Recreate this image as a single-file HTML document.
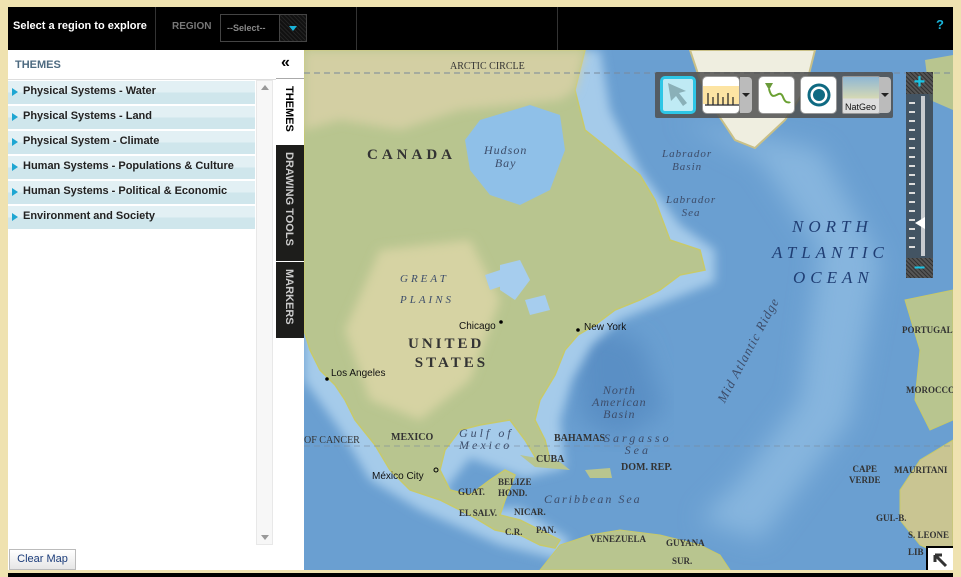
<!DOCTYPE html>
<html><head><meta charset="utf-8">
<style>
*{margin:0;padding:0;box-sizing:border-box}
body{width:961px;height:577px;background:#efe2b0;position:relative;overflow:hidden;font-family:"Liberation Sans",sans-serif}
.hdr{position:absolute;left:8px;top:7px;width:945px;height:43px;background:#000}
.hdr .t{position:absolute;left:5px;top:13px;color:#fff;font-weight:bold;font-size:11px}
.sep{position:absolute;top:0;width:1px;height:43px;background:#333}
.reg{position:absolute;left:164px;top:14px;color:#777;font-weight:bold;font-size:10px}
.sel{position:absolute;left:212px;top:7px;width:87px;height:28px;border:1px solid #444;background:#000}
.sel span{position:absolute;left:6px;top:8px;color:#888;font-size:9px;font-weight:bold}
.sel i{position:absolute;right:0;top:0;width:27px;height:26px;border-left:1px solid #444;background:repeating-linear-gradient(45deg,#222 0 1px,#111 1px 3px)}
.sel i:after{content:"";position:absolute;left:9px;top:11px;border:4px solid transparent;border-top:5px solid #19b3d8}
.q{position:absolute;left:928px;top:10px;color:#19b3d8;font-weight:bold;font-size:13px}
.left{position:absolute;left:8px;top:50px;width:268px;height:520px;background:#fff}
.th{position:absolute;left:7px;top:9px;color:#4d6a80;font-weight:bold;font-size:11px}
.hl{position:absolute;left:0;top:29px;width:268px;height:1px;background:#ddd}
.item{position:absolute;left:0;width:247px;height:23px;background:linear-gradient(#e2f0f4 0 50%,#cfe6ec 50%);font-size:11px;font-weight:bold;color:#222}
.item span{position:absolute;left:15px;top:4px}
.item:before{content:"";position:absolute;left:4px;top:7px;border:4px solid transparent;border-left:6px solid #1ea6d2;border-right:0}
.sb{position:absolute;left:248px;top:30px;width:17px;height:465px;background:#f7f7f7;border:1px solid #e8e8e8}
.cm{position:absolute;left:1px;top:499px;width:67px;height:21px;border:1px solid #bbb;background:linear-gradient(#fff,#e6e6e6);color:#1b3c7a;font-size:11px;text-align:center;line-height:19px}
.tabs{position:absolute;left:276px;top:50px;width:28px;height:520px;background:#fff}
.tab{position:absolute;left:0;width:28px;background:#1d1d1b;color:#ccc;font-weight:bold;font-size:11px;writing-mode:vertical-rl}
.tab span{position:absolute;left:7px;top:7px}
.map{position:absolute;left:304px;top:50px;width:649px;height:520px;overflow:hidden;background:#6fa5d5}
.lb{position:absolute;font-family:"Liberation Serif",serif;color:#333;white-space:nowrap}
.sc{font-weight:bold;letter-spacing:2px}
.it{font-style:italic;color:#3d4d6a;letter-spacing:1px}
.oc{font-style:italic;color:#1f3d73;letter-spacing:5px;font-size:17px}
.cty{font-family:"Liberation Sans",sans-serif;font-size:10px;color:#111}
.tools{position:absolute;left:351px;top:22px;width:238px;height:46px;background:rgba(80,80,80,.85);border-radius:2px}
.btn{position:absolute;top:4px;height:38px;background:#fff;border-radius:5px;border:1px solid #999}
.zoom{position:absolute;left:602px;top:22px;width:27px;height:206px;background:rgba(60,70,80,.85)}
.bot{position:absolute;left:8px;top:573px;width:945px;height:4px;background:#000}
</style></head><body>
<div class="hdr">
 <div class="t">Select a region to explore</div>
 <div class="sep" style="left:147px"></div>
 <div class="reg">REGION</div>
 <div class="sel"><span>--Select--</span><i></i></div>
 <div class="sep" style="left:348px"></div>
 <div class="sep" style="left:549px"></div>
 <div class="q">?</div>
</div>
<div class="left">
 <div class="th">THEMES</div><div class="hl"></div>
 <div class="item" style="top:31px"><span>Physical Systems - Water</span></div>
 <div class="item" style="top:56px"><span>Physical Systems - Land</span></div>
 <div class="item" style="top:81px"><span>Physical System - Climate</span></div>
 <div class="item" style="top:106px"><span>Human Systems - Populations &amp; Culture</span></div>
 <div class="item" style="top:131px"><span>Human Systems - Political &amp; Economic</span></div>
 <div class="item" style="top:156px"><span>Environment and Society</span></div>
 <div class="sb"><div style="position:absolute;left:4px;top:4px;border:4px solid transparent;border-bottom:5px solid #999;border-top:0"></div><div style="position:absolute;left:4px;bottom:4px;border:4px solid transparent;border-top:5px solid #999;border-bottom:0"></div></div>
 <div class="cm">Clear Map</div>
</div>
<div class="tabs">
 <div style="position:absolute;left:5px;top:4px;font-size:16px;font-weight:bold;color:#000">«</div>
 <div style="position:absolute;left:0;top:28px;width:28px;height:1px;background:#aaa"></div>
 <div class="tab" style="top:29px;height:66px;background:#fff;color:#000"><span>THEMES</span></div>
 <div class="tab" style="top:95px;height:116px"><span>DRAWING TOOLS</span></div>
 <div class="tab" style="top:212px;height:76px"><span>MARKERS</span></div>
</div>
<div class="map">
<svg width="649" height="520" viewBox="304 50 649 520" style="position:absolute;left:0;top:0">
 <defs><filter id="b"><feGaussianBlur stdDeviation="12"/></filter><filter id="b2"><feGaussianBlur stdDeviation="5"/></filter></defs>
 <rect x="304" y="50" width="649" height="520" fill="#6a9fd1"/>
 <path d="M680 120 L760 160 L820 250 L800 400 L740 480 L700 520 L760 540 L850 420 L880 260 L820 150Z" fill="#86b5de" filter="url(#b)"/>
 <path d="M575 320 L640 340 L665 410 L620 440 L580 420Z" fill="#5a8fc5" filter="url(#b)"/>
 <path d="M304 50 L600 50 L610 110 L640 170 L680 225 L715 250 L715 282 L670 300 L620 320 L592 345 L572 380 L560 420 L565 468 L525 478 L470 458 L445 490 L470 508 L520 508 L570 540 L560 560 L500 545 L420 510 L370 480 L340 430 L315 395 L304 380Z" fill="#a5cbea" filter="url(#b2)"/>
 <path d="M304 50 L585 50 L575 90 L585 130 L610 150 L640 175 L655 200 L670 240 L700 250 L705 270 L680 275 L660 290 L640 300 L615 310 L595 325 L578 335 L565 350 L555 375 L540 400 L535 420 L545 440 L550 460 L540 465 L525 440 L510 420 L480 425 L460 430 L445 450 L440 470 L450 490 L470 495 L490 480 L505 470 L515 475 L505 500 L500 515 L520 520 L540 530 L560 540 L555 548 L540 545 L520 535 L495 530 L470 515 L440 500 L410 490 L390 470 L375 445 L355 420 L345 400 L335 385 L320 370 L310 350 L304 330Z" fill="#b8c58f" stroke="#c7c96a" stroke-width="1.5"/>
 <path d="M304 50 L585 50 L575 90 L560 100 L460 110 L400 130 L340 120 L304 130Z" fill="#d3cfa3" filter="url(#b2)"/>
 <path d="M380 250 L470 240 L500 300 L470 380 L420 420 L370 400 L345 330Z" fill="#d6d3a3" filter="url(#b2)"/>
 <path d="M480 120 L530 105 L560 115 L565 150 L550 190 L520 205 L490 195 L470 170 L465 140Z" fill="#8fc0e8"/>
 <path d="M500 265 L520 260 L530 280 L515 300 L500 290Z M525 300 L545 295 L550 310 L530 315Z M485 275 L500 270 L505 285 L490 290Z" fill="#a6cdee"/>
 <path d="M690 50 L815 50 L805 90 L785 120 L755 148 L735 140 L715 110 L700 80Z" fill="#efeee0" stroke="#c9c087" stroke-width="2"/>
 <path d="M540 570 L560 545 L590 535 L620 530 L660 535 L700 545 L720 555 L730 570Z" fill="#b8c58f" stroke="#c7c96a"/>
 <path d="M520 455 L560 462 L570 470 L535 467Z M585 470 L610 468 L612 478 L590 478Z" fill="#b8c58f"/>
 <path d="M905 300 L953 290 L953 420 L930 430 L915 400 L920 350Z" fill="#b8c58f" stroke="#c7c96a"/>
 <path d="M953 440 L920 460 L900 490 L900 520 L920 545 L953 560Z" fill="#c9c592" stroke="#c7c96a"/>
 <path d="M925 60 L953 55 L953 110 L930 100Z" fill="#b8c58f"/>
 <line x1="304" y1="73" x2="953" y2="73" stroke="#7a8a9a" stroke-dasharray="6 4"/>
 <line x1="304" y1="446" x2="953" y2="446" stroke="#7a8a9a" stroke-dasharray="6 4" opacity=".6"/>
 <circle cx="501" cy="322" r="1.8" fill="#000"/><circle cx="578" cy="330" r="1.8" fill="#000"/><circle cx="327" cy="379" r="1.8" fill="#000"/><circle cx="436" cy="470" r="2" fill="none" stroke="#000"/>
</svg>
 <div class="lb" style="left:146px;top:11px;font-size:10px">ARCTIC CIRCLE</div>
 <div class="lb sc" style="left:63px;top:97px;font-size:15px;letter-spacing:4px">CANADA</div>
 <div class="lb it" style="left:180px;top:94px;font-size:12px;text-align:center;line-height:13px">Hudson<br>Bay</div>
 <div class="lb it" style="left:358px;top:98px;font-size:11px;text-align:center;line-height:13px">Labrador<br>Basin</div>
 <div class="lb it" style="left:362px;top:144px;font-size:11px;text-align:center;line-height:13px">Labrador<br>Sea</div>
 <div class="lb oc" style="left:488px;top:167px">NORTH</div>
 <div class="lb oc" style="left:468px;top:193px">ATLANTIC</div>
 <div class="lb oc" style="left:489px;top:218px">OCEAN</div>
 <div class="lb it" style="left:96px;top:219px;font-size:11px;letter-spacing:3px;line-height:21px">GREAT<br>PLAINS</div>
 <div class="lb sc" style="left:104px;top:285px;font-size:15px;line-height:19px;letter-spacing:3px">UNITED<br>&nbsp;STATES</div>
 <div class="lb cty" style="left:155px;top:271px">Chicago</div>
 <div class="lb cty" style="left:280px;top:272px">New York</div>
 <div class="lb cty" style="left:27px;top:318px">Los Angeles</div>
 <div class="lb it" style="left:288px;top:334px;font-size:12px;text-align:center;line-height:12px">North<br>American<br>Basin</div>
 <div class="lb it" style="left:410px;top:348px;font-size:13px;transform:rotate(-62deg);transform-origin:left top">Mid Atlantic Ridge</div>
 <div class="lb" style="left:0;top:385px;font-size:10px">OF CANCER</div>
 <div class="lb sc" style="left:87px;top:382px;font-size:10px;letter-spacing:0">MEXICO</div>
 <div class="lb it" style="left:155px;top:377px;font-size:12px;line-height:12px;letter-spacing:3px">Gulf of<br>Mexico</div>
 <div class="lb sc" style="left:250px;top:383px;font-size:10px;letter-spacing:0">BAHAMAS</div>
 <div class="lb it" style="left:300px;top:382px;font-size:12px;line-height:12px;text-align:center;letter-spacing:3px">Sargasso<br>Sea</div>
 <div class="lb sc" style="left:232px;top:404px;font-size:10px;letter-spacing:0">CUBA</div>
 <div class="lb sc" style="left:317px;top:412px;font-size:10px;letter-spacing:0">DOM. REP.</div>
 <div class="lb cty" style="left:68px;top:421px">México City</div>
 <div class="lb sc" style="left:194px;top:427px;font-size:9px;letter-spacing:0;line-height:11px">BELIZE<br>HOND.</div>
 <div class="lb sc" style="left:154px;top:437px;font-size:9px;letter-spacing:0">GUAT.</div>
 <div class="lb it" style="left:240px;top:442px;font-size:12px;letter-spacing:2px">Caribbean Sea</div>
 <div class="lb sc" style="left:155px;top:458px;font-size:9px;letter-spacing:0">EL SALV.</div>
 <div class="lb sc" style="left:210px;top:457px;font-size:9px;letter-spacing:0">NICAR.</div>
 <div class="lb sc" style="left:201px;top:477px;font-size:9px;letter-spacing:0">C.R.</div>
 <div class="lb sc" style="left:232px;top:475px;font-size:9px;letter-spacing:0">PAN.</div>
 <div class="lb sc" style="left:286px;top:484px;font-size:9px;letter-spacing:0">VENEZUELA</div>
 <div class="lb sc" style="left:362px;top:488px;font-size:9px;letter-spacing:0">GUYANA</div>
 <div class="lb sc" style="left:368px;top:506px;font-size:9px;letter-spacing:0">SUR.</div>
 <div class="lb sc" style="left:598px;top:275px;font-size:9px;letter-spacing:0">PORTUGAL</div>
 <div class="lb sc" style="left:602px;top:335px;font-size:9px;letter-spacing:0">MOROCCO</div>
 <div class="lb sc" style="left:545px;top:414px;font-size:9px;letter-spacing:0;text-align:center;line-height:11px">CAPE<br>VERDE</div>
 <div class="lb sc" style="left:590px;top:415px;font-size:9px;letter-spacing:0">MAURITANI</div>
 <div class="lb sc" style="left:572px;top:463px;font-size:9px;letter-spacing:0">GUI.-B.</div>
 <div class="lb sc" style="left:604px;top:480px;font-size:9px;letter-spacing:0">S. LEONE</div>
 <div class="lb sc" style="left:604px;top:497px;font-size:9px;letter-spacing:0">LIB</div>
 <div class="tools">
  <div class="btn" style="left:5px;width:36px;background:#bfeaf4;border:3px solid #2ec6e6"><svg width="30" height="32" viewBox="0 0 30 32"><path d="M5 4 L23 12 L16 14 L24 24 L20 27 L13 17 L8 22Z" fill="#8ab0b8"/></svg></div>
  <div class="btn" style="left:47px;width:38px;background:linear-gradient(#fff 0 25%,#fde4a3 25% 75%,#fff 75%)"><svg width="38" height="36"><path d="M2 28 H36 M5 28V16 M10 28V20 M15 28V16 M20 28V20 M25 28V16 M30 28V20" stroke="#222" stroke-width="1.2"/></svg></div>
  <div style="position:absolute;left:85px;top:5px;width:12px;height:36px;background:#bbb;border-radius:0 4px 4px 0"><div style="position:absolute;left:2px;top:16px;border:4px solid transparent;border-top:4px solid #222"></div></div>
  <div class="btn" style="left:103px;width:37px"><svg width="36" height="36"><path d="M6 6 L14 6 L10 13Z" fill="#6a9a3a"/><path d="M10 12 C14 28 20 10 24 20 C27 28 30 24 31 26" stroke="#6aa032" stroke-width="2" fill="none"/></svg></div>
  <div class="btn" style="left:145px;width:37px"><svg width="36" height="36"><circle cx="18" cy="18" r="10" fill="none" stroke="#0f6a82" stroke-width="3"/><circle cx="18" cy="18" r="6" fill="#0f6a82"/></svg></div>
  <div class="btn" style="left:187px;width:38px;background:linear-gradient(#8fb7d4,#d7d9b4 60%,#ddd 60%);border-radius:2px"><span style="position:absolute;left:2px;top:25px;font-size:9px;color:#111">NatGeo</span></div>
  <div style="position:absolute;left:224px;top:5px;width:12px;height:36px;background:#bbb;border-radius:0 4px 4px 0"><div style="position:absolute;left:2px;top:16px;border:4px solid transparent;border-top:4px solid #222"></div></div>
 </div>
 <div class="zoom">
  <div style="position:absolute;left:0;top:0;width:27px;height:22px;background:repeating-linear-gradient(45deg,#333 0 1px,#555 1px 3px);color:#19c3e4;font-size:20px;text-align:center;line-height:20px;font-weight:bold">+</div>
  <div style="position:absolute;left:15px;top:24px;width:4px;height:160px;background:#c8ccd0"></div>
  <div style="position:absolute;left:3px;top:30px;width:6px;height:150px;background:repeating-linear-gradient(#ddd 0 2px,transparent 2px 9px)"></div>
  <div style="position:absolute;left:9px;top:145px;border:6px solid transparent;border-right:10px solid #fff;border-left:0"></div>
  <div style="position:absolute;left:0;bottom:0;width:27px;height:20px;background:repeating-linear-gradient(45deg,#333 0 1px,#555 1px 3px);color:#19c3e4;font-size:20px;text-align:center;line-height:18px;font-weight:bold">–</div>
 </div>
 <div style="position:absolute;left:622px;top:496px;width:27px;height:24px;background:#fff;border:2px solid #000;border-right:0;border-bottom:0"><svg width="25" height="22"><path d="M18 18 L7 7 M7 7 H14 M7 7 V14" stroke="#333" stroke-width="3" fill="none"/></svg></div>
</div>
<div class="bot"></div>
</body></html>
